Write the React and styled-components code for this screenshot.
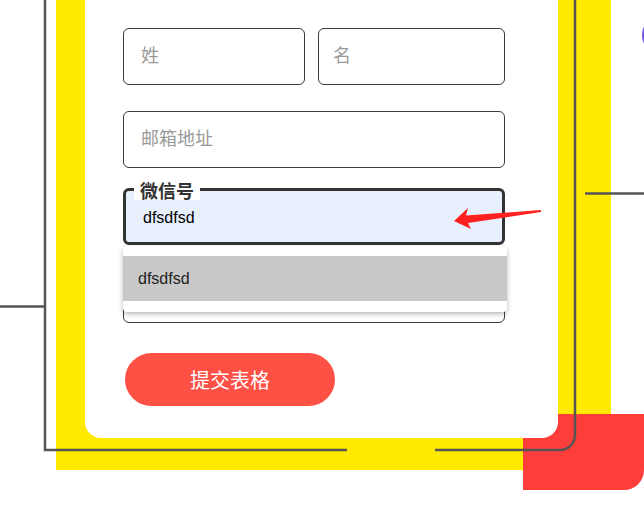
import React from "react";
import styled, { createGlobalStyle } from "styled-components";

const GlobalStyle = createGlobalStyle`
  html, body {
    margin: 0;
    padding: 0;
    background: #fff;
    overflow: hidden;
  }
  body {
    font-family: "Noto Sans", "Noto Sans CJK SC", sans-serif;
  }
`;

const Stage = styled.div`
  position: relative;
  width: 644px;
  height: 507px;
  overflow: hidden;
  padding-left: 56px;
  box-sizing: border-box;
`;

const Frame = styled.div`
  width: 555px;
  margin-top: -40px;
  padding: 0 0 32px 29px;
  box-sizing: border-box;
  background: #ffea00;
`;

const Card = styled.div`
  position: relative;
  z-index: 2;
  width: 473px;
  height: 478px;
  box-sizing: border-box;
  padding: 68px 0 0 38px;
  background: #fff;
  border-radius: 0 0 16px 16px;
`;

const Form = styled.form`
  width: 382px;
  display: flex;
  flex-direction: column;
`;

const Row = styled.div`
  display: flex;
  gap: 13px;
  margin-top: ${(p) => p.$top || 0}px;
`;

const Input = styled.input`
  flex: ${(p) => (p.$w ? `0 0 ${p.$w}px` : "1")};
  min-width: 0;
  width: 100%;
  height: 57px;
  box-sizing: border-box;
  border: 1px solid #3a3a3a;
  border-radius: 6px;
  padding: 0 ${(p) => p.$pad || 17}px;
  font-family: "Liberation Sans", "Noto Sans CJK SC", sans-serif;
  font-size: 18px;
  color: #111;
  background: #fff;
  outline: none;

  &::placeholder {
    color: #9a9a9a;
    font-family: "Noto Sans CJK SC", sans-serif;
  }
`;

const FieldWrap = styled.div`
  position: relative;
  margin-top: ${(p) => p.$top || 0}px;
  z-index: ${(p) => p.$z || 0};
`;

const FocusBox = styled.div`
  height: 57px;
  box-sizing: border-box;
  border: 3px solid #333;
  border-radius: 6px;
  background: #e8f0fe;
  display: flex;
  align-items: center;
  padding: 2px 17px 0;
  font-family: "Liberation Sans", sans-serif;
  font-size: 16px;
  color: #000;
`;

const Legend = styled.span`
  position: absolute;
  left: 11px;
  top: -8px;
  height: 20px;
  padding: 0 6px;
  background: #fff;
  font-family: "Noto Sans CJK SC", sans-serif;
  font-weight: 700;
  font-size: 18px;
  line-height: 20px;
  color: #333;
`;

const Suggest = styled.div`
  position: absolute;
  left: 0;
  top: calc(100% + 1px);
  width: 384px;
  padding: 10px 0 11px;
  background: #fff;
  border-radius: 4px;
  box-shadow: 0 2px 5px rgba(0, 0, 0, 0.28);
`;

const SuggestItem = styled.div`
  height: 45px;
  display: flex;
  align-items: center;
  padding-left: 15px;
  background: #c8c8c8;
  font-family: "Liberation Sans", sans-serif;
  font-size: 16px;
  color: #222;
`;

const Submit = styled.button`
  margin: 30px 0 0 2px;
  width: 210px;
  height: 53px;
  border: none;
  border-radius: 27px;
  background: #ff5046;
  color: #fff;
  font-family: "Noto Sans CJK SC", sans-serif;
  font-size: 20px;
  cursor: pointer;
`;

const RedBlock = styled.div`
  position: absolute;
  z-index: 1;
  left: 523px;
  top: 414px;
  width: 121px;
  height: 76px;
  background: #ff3e3b;
  border-bottom-right-radius: 20px;
`;

const Overlay = styled.svg`
  position: absolute;
  left: 0;
  top: 0;
  z-index: ${(p) => p.$z};
  pointer-events: none;
`;

export default function App() {
  return (
    <>
      <GlobalStyle />
      <Stage>
        <Frame>
          <Card>
            <Form onSubmit={(e) => e.preventDefault()}>
              <Row>
                <Input $w={182} placeholder="姓" />
                <Input $pad={14} placeholder="名" />
              </Row>
              <Row $top={26}>
                <Input placeholder="邮箱地址" />
              </Row>
              <FieldWrap $top={20} $z={3}>
                <FocusBox>dfsdfsd</FocusBox>
                <Legend>微信号</Legend>
                <Suggest>
                  <SuggestItem>dfsdfsd</SuggestItem>
                </Suggest>
              </FieldWrap>
              <FieldWrap $top={21}>
                <Row>
                  <Input />
                </Row>
              </FieldWrap>
              <Submit type="submit">提交表格</Submit>
            </Form>
          </Card>
        </Frame>
        <RedBlock />
        <Overlay $z={1} width="644" height="507" viewBox="0 0 644 507">
          <g fill="none" stroke="#555" strokeWidth="2.5">
            <path d="M0 306.5 H45" />
            <path d="M45 0 V450 H347" />
            <path d="M435 450 H560 A15 15 0 0 0 575 435 V0" />
            <path d="M585 193.5 H644" />
          </g>
          <circle cx="662" cy="35" r="19" fill="none" stroke="#6a4fe2" strokeWidth="2" />
        </Overlay>
        <Overlay $z={4} width="644" height="507" viewBox="0 0 644 507">
          <polygon
            points="454,221 468,208 466,215.5 541,210 541,212 468,223 471,229"
            fill="#ff2020"
          />
        </Overlay>
      </Stage>
    </>
  );
}
